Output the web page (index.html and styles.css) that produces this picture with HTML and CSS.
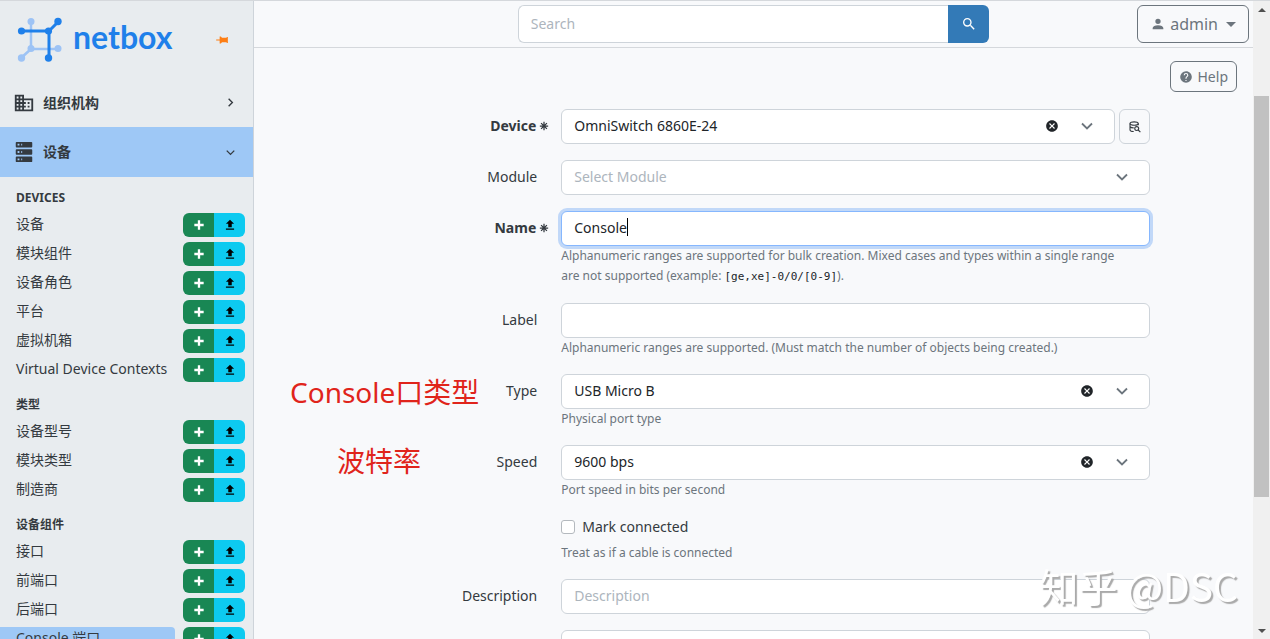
FILE: index.html
```
<!DOCTYPE html>
<html lang="zh-CN">
<head>
    <meta charset="UTF-8">
    <meta name="viewport" content="width=device-width, initial-scale=1.0">
    <title>NetBox</title>
    <link rel="stylesheet" href="styles.css">
</head>
<body>
    <svg class="sprite" aria-hidden="true">
        <symbol id="plus" viewBox="0 0 24 24"><path d="M20 14H14V20H10V14H4V10H10V4H14V10H20V14Z"/></symbol>
        <symbol id="upload" viewBox="0 0 24 24"><path d="M9,16V10H5L12,3L19,10H15V16H9M5,20V18H19V20H5Z"/></symbol>
        <symbol id="clear" viewBox="0 0 24 24"><path d="M12,2C17.53,2 22,6.47 22,12C22,17.53 17.53,22 12,22C6.47,22 2,17.53 2,12C2,6.47 6.47,2 12,2M15.59,7L12,10.59L8.41,7L7,8.41L10.59,12L7,15.59L8.41,17L12,13.41L15.59,17L17,15.59L13.41,12L17,8.41L15.59,7Z"/></symbol>
        <symbol id="chevron" viewBox="0 0 12 12"><path d="M1 3.5L6 8.5L11 3.5" fill="none" stroke="currentColor" stroke-width="1.8"/></symbol>
        <symbol id="asterisk" viewBox="0 0 12 12"><path d="M6 1V11M1 6H11M2.5 2.5L9.5 9.5M9.5 2.5L2.5 9.5" fill="none" stroke="currentColor" stroke-width="1.5"/></symbol>
    </svg>
    <div class="app">
        <nav class="sidebar">
            <div class="brand">
                <a class="logo" href="#">
                    <svg width="46" height="46" viewBox="0 0 46 46">
                        <g fill="#9dc3f5" stroke="#9dc3f5" stroke-width="2.5">
                            <path d="M14 4V32H41M14 32L4 41" fill="none"/>
                            <g stroke="none"><circle cx="14" cy="4.500" r="3.500"/><circle cx="14" cy="31.500" r="3.500"/><circle cx="41" cy="31.500" r="3.500"/><circle cx="4.500" cy="41" r="3.700"/></g>
                        </g>
                        <g fill="#1f80ea" stroke="#1f80ea" stroke-width="3">
                            <path d="M4 14H32V41M32 14L41 5" fill="none"/>
                            <g stroke="none"><circle cx="4.500" cy="14" r="3.600"/><circle cx="31.500" cy="14" r="3.600"/><circle cx="41" cy="4.500" r="3.700"/><circle cx="31.500" cy="41" r="3.700"/></g>
                        </g>
                    </svg>
                    <span>netbox</span>
                </a>
                <button class="pin" type="button" aria-label="Pin">
                    <svg width="14" height="14" viewBox="0 0 24 24"><path transform="rotate(90 12 12)" d="M16,12V4H17V2H7V4H8V12L6,14V16H11.2V22H12.8V16H18V14L16,12Z"/></svg>
                </button>
            </div>
            <a class="section" href="#">
                <svg width="22" height="22" viewBox="0 0 24 24"><path d="M18,15H16V17H18M18,11H16V13H18M20,19H12V17H14V15H12V13H14V11H12V9H20M10,7H8V5H10M10,11H8V9H10M10,15H8V13H10M10,19H8V17H10M6,7H4V5H6M6,11H4V9H6M6,15H4V13H6M6,19H4V17H6M12,7V3H2V21H22V7H12Z"/></svg>
                <span>组织机构</span>
                <svg class="arrow right" width="9" height="9"><use href="#chevron"/></svg>
            </a>
            <a class="section open" href="#">
                <svg width="22" height="22" viewBox="0 0 24 24"><path d="M4,1H20A1,1 0 0,1 21,2V6A1,1 0 0,1 20,7H4A1,1 0 0,1 3,6V2A1,1 0 0,1 4,1M4,9H20A1,1 0 0,1 21,10V14A1,1 0 0,1 20,15H4A1,1 0 0,1 3,14V10A1,1 0 0,1 4,9M4,17H20A1,1 0 0,1 21,18V22A1,1 0 0,1 20,23H4A1,1 0 0,1 3,22V18A1,1 0 0,1 4,17M9,5H10V3H9V5M9,13H10V11H9V13M9,21H10V19H9V21M5,3V5H7V3H5M5,11V13H7V11H5M5,19V21H7V19H5Z"/></svg>
                <span>设备</span>
                <svg class="arrow" width="9" height="9"><use href="#chevron"/></svg>
            </a>
            <div class="menu">
                <h6>DEVICES</h6>
                <div class="entry"><a href="#">设备</a><button class="add" type="button" aria-label="Add"><svg><use href="#plus"/></svg></button><button class="import" type="button" aria-label="Import"><svg><use href="#upload"/></svg></button></div>
                <div class="entry"><a href="#">模块组件</a><button class="add" type="button" aria-label="Add"><svg><use href="#plus"/></svg></button><button class="import" type="button" aria-label="Import"><svg><use href="#upload"/></svg></button></div>
                <div class="entry"><a href="#">设备角色</a><button class="add" type="button" aria-label="Add"><svg><use href="#plus"/></svg></button><button class="import" type="button" aria-label="Import"><svg><use href="#upload"/></svg></button></div>
                <div class="entry"><a href="#">平台</a><button class="add" type="button" aria-label="Add"><svg><use href="#plus"/></svg></button><button class="import" type="button" aria-label="Import"><svg><use href="#upload"/></svg></button></div>
                <div class="entry"><a href="#">虚拟机箱</a><button class="add" type="button" aria-label="Add"><svg><use href="#plus"/></svg></button><button class="import" type="button" aria-label="Import"><svg><use href="#upload"/></svg></button></div>
                <div class="entry"><a href="#">Virtual Device Contexts</a><button class="add" type="button" aria-label="Add"><svg><use href="#plus"/></svg></button><button class="import" type="button" aria-label="Import"><svg><use href="#upload"/></svg></button></div>
                <h6>类型</h6>
                <div class="entry"><a href="#">设备型号</a><button class="add" type="button" aria-label="Add"><svg><use href="#plus"/></svg></button><button class="import" type="button" aria-label="Import"><svg><use href="#upload"/></svg></button></div>
                <div class="entry"><a href="#">模块类型</a><button class="add" type="button" aria-label="Add"><svg><use href="#plus"/></svg></button><button class="import" type="button" aria-label="Import"><svg><use href="#upload"/></svg></button></div>
                <div class="entry"><a href="#">制造商</a><button class="add" type="button" aria-label="Add"><svg><use href="#plus"/></svg></button><button class="import" type="button" aria-label="Import"><svg><use href="#upload"/></svg></button></div>
                <h6>设备组件</h6>
                <div class="entry"><a href="#">接口</a><button class="add" type="button" aria-label="Add"><svg><use href="#plus"/></svg></button><button class="import" type="button" aria-label="Import"><svg><use href="#upload"/></svg></button></div>
                <div class="entry"><a href="#">前端口</a><button class="add" type="button" aria-label="Add"><svg><use href="#plus"/></svg></button><button class="import" type="button" aria-label="Import"><svg><use href="#upload"/></svg></button></div>
                <div class="entry"><a href="#">后端口</a><button class="add" type="button" aria-label="Add"><svg><use href="#plus"/></svg></button><button class="import" type="button" aria-label="Import"><svg><use href="#upload"/></svg></button></div>
                <div class="entry active"><a href="#">Console 端口</a><button class="add" type="button" aria-label="Add"><svg><use href="#plus"/></svg></button><button class="import" type="button" aria-label="Import"><svg><use href="#upload"/></svg></button></div>
            </div>
        </nav>

        <main class="content">
            <header class="topbar">
                <form class="search">
                    <input type="text" placeholder="Search" aria-label="Search">
                    <button type="button" aria-label="Search">
                        <svg width="16" height="16" viewBox="0 0 24 24"><path d="M9.500,3A6.500,6.500 0 0,1 16,9.500C16,11.110 15.410,12.590 14.440,13.730L14.710,14H15.500L20.500,19L19,20.500L14,15.500V14.710L13.730,14.440C12.590,15.410 11.110,16 9.500,16A6.500,6.500 0 0,1 3,9.500A6.500,6.500 0 0,1 9.500,3M9.500,5C7,5 5,7 5,9.500C5,12 7,14 9.500,14C12,14 14,12 14,9.500C14,7 12,5 9.500,5Z"/></svg>
                    </button>
                </form>
                <button class="user" type="button">
                    <svg width="16" height="16" viewBox="0 0 24 24"><path d="M12,4A4,4 0 0,1 16,8A4,4 0 0,1 12,12A4,4 0 0,1 8,8A4,4 0 0,1 12,4M12,14C16.420,14 20,15.790 20,18V20H4V18C4,15.790 7.580,14 12,14Z"/></svg>
                    admin
                    <span class="caret-down"></span>
                </button>
            </header>

            <div class="tools">
                <button class="help" type="button">
                    <svg width="14" height="14" viewBox="0 0 24 24"><path d="M15.070,11.250L14.170,12.170C13.450,12.890 13,13.500 13,15H11V14.500C11,13.390 11.450,12.390 12.170,11.670L13.410,10.410C13.780,10.050 14,9.550 14,9C14,7.890 13.100,7 12,7A2,2 0 0,0 10,9H8A4,4 0 0,1 12,5A4,4 0 0,1 16,9C16,9.880 15.640,10.670 15.070,11.250M13,19H11V17H13M12,2A10,10 0 0,0 2,12A10,10 0 0,0 12,22A10,10 0 0,0 22,12C22,6.470 17.500,2 12,2Z"/></svg>
                    Help
                </button>
            </div>

            <form class="fields">
                <div class="row">
                    <label class="required" for="device">Device<svg><use href="#asterisk"/></svg></label>
                    <div class="field with-button">
                        <div class="select">
                            <select id="device"><option>OmniSwitch 6860E-24</option></select>
                            <button class="clear" type="button" aria-label="Clear"><svg><use href="#clear"/></svg></button>
                            <svg class="chevron"><use href="#chevron"/></svg>
                        </div>
                        <button class="lookup" type="button" aria-label="Advanced search">
                            <svg width="12" height="12" viewBox="0 0 14 14"><g fill="none" stroke="currentColor" stroke-width="1.300"><ellipse cx="6" cy="3" rx="4.800" ry="2"/><path d="M1.200 3V10.500C1.200 11.500 3 12.200 5.500 12.300M10.800 3V5M1.200 6.500C2 7.600 3.500 8 5.500 8"/><circle cx="9" cy="8.800" r="2.300"/><path d="M10.700 10.500L13.300 13.100"/></g></svg>
                        </button>
                    </div>
                </div>
                <div class="row">
                    <label for="module">Module</label>
                    <div class="field">
                        <div class="select">
                            <select id="module" class="empty"><option>Select Module</option></select>
                            <svg class="chevron"><use href="#chevron"/></svg>
                        </div>
                    </div>
                </div>
                <div class="row">
                    <label class="required" for="name">Name<svg><use href="#asterisk"/></svg></label>
                    <div class="field">
                        <input id="name" class="focused" type="text" value="Console">
                        <span class="text-cursor"></span>
                        <p>Alphanumeric ranges are supported for bulk creation. Mixed cases and types within a single range are not supported (example: <code>[ge,xe]-0/0/[0-9]</code>).</p>
                    </div>
                </div>
                <div class="row">
                    <label for="label">Label</label>
                    <div class="field">
                        <input id="label" type="text">
                        <p>Alphanumeric ranges are supported. (Must match the number of objects being created.)</p>
                    </div>
                </div>
                <div class="row">
                    <label for="type">Type</label>
                    <div class="field">
                        <div class="select">
                            <select id="type"><option>USB Micro B</option></select>
                            <button class="clear" type="button" aria-label="Clear"><svg><use href="#clear"/></svg></button>
                            <svg class="chevron"><use href="#chevron"/></svg>
                        </div>
                        <p>Physical port type</p>
                    </div>
                    <span class="note note-type">Console口类型</span>
                </div>
                <div class="row">
                    <label for="speed">Speed</label>
                    <div class="field">
                        <div class="select">
                            <select id="speed"><option>9600 bps</option></select>
                            <button class="clear" type="button" aria-label="Clear"><svg><use href="#clear"/></svg></button>
                            <svg class="chevron"><use href="#chevron"/></svg>
                        </div>
                        <p>Port speed in bits per second</p>
                    </div>
                    <span class="note note-speed">波特率</span>
                </div>
                <div class="row">
                    <div class="field check">
                        <input id="connected" type="checkbox"><label for="connected">Mark connected</label>
                        <p>Treat as if a cable is connected</p>
                    </div>
                </div>
                <div class="row">
                    <label for="description">Description</label>
                    <div class="field"><input id="description" type="text" placeholder="Description"></div>
                </div>
                <div class="row">
                    <div class="field"><input type="text" aria-label="Tags"></div>
                </div>
            </form>
        </main>

        <div class="scrollbar">
            <span class="step up"></span>
            <span class="before"></span>
            <span class="thumb"></span>
            <span class="after"></span>
            <span class="step down"></span>
        </div>
    </div>
    <div class="watermark">知乎 @DSC</div>
</body>
</html>
```
FILE: styles.css
```
* {
    box-sizing: border-box;
}
body {
    margin: 0;
    background-color: #f8f9fb;
    color: #343a40;
    font-family: "Noto Sans", "Noto Sans CJK SC", sans-serif;
    font-size: 14px;
    overflow: hidden;
}
button, input, select {
    font: inherit;
    margin: 0;
}
button {
    display: flex;
    align-items: center;
    justify-content: center;
    padding: 0;
    border: 0;
    background: none;
    color: inherit;
    cursor: pointer;
}
a {
    color: inherit;
    text-decoration: none;
}
svg {
    fill: currentColor;
    flex: none;
}
.sprite {
    display: none;
}
.app {
    display: flex;
    height: 100vh;
    border-top: 1px solid #d5d8dc;
}

/* sidebar */
.sidebar {
    width: 254px;
    flex: none;
    overflow: hidden;
    background-color: #e8ecef;
    border-right: 1px solid #ced4da;
}
.brand {
    display: flex;
    align-items: center;
    justify-content: space-between;
    height: 77px;
    padding: 0 24px 0 17px;
}
.logo {
    display: flex;
    align-items: center;
    gap: 10px;
    color: #1f80ea;
    font-family: Lato, sans-serif;
    font-size: 32px;
    font-weight: 700;
    line-height: 36px;
}
.logo span {
    padding-bottom: 6px;
}
.pin {
    color: #fd7e14;
}
.section {
    display: flex;
    align-items: center;
    height: 49px;
    padding: 0 18px 0 13px;
    gap: 8px;
    font-weight: 700;
}
.section span {
    flex: 1;
    padding-bottom: 2px;
}
.section.open {
    height: 50px;
    background-color: #9ec8f6;
}
.arrow.right {
    transform: rotate(-90deg);
}
.menu h6 {
    margin: 0;
    padding: 12px 16px 0;
    height: 36px;
    font-size: 12px;
    line-height: 18px;
}
.entry {
    display: flex;
    height: 24px;
    margin: 0 8px 5px 0;
}
.menu .entry + h6 {
    height: 33px;
    padding-top: 9px;
}
.entry a {
    flex: 1;
    margin-right: 8px;
    padding-left: 16px;
    line-height: 22px;
    white-space: nowrap;
    border-radius: 0 4px 4px 0;
}
.entry.active a {
    background-color: #9ec8f6;
}
.entry button {
    width: 31px;
}
.entry svg {
    width: 14px;
    height: 14px;
}
.add {
    background-color: #198754;
    color: #fff;
    border-radius: 6px 0 0 6px;
}
.import {
    background-color: #0dcaf0;
    color: #000;
    border-radius: 0 6px 6px 0;
}

/* top bar */
.content {
    flex: 1;
    min-width: 0;
    overflow: hidden;
}
.topbar {
    display: grid;
    grid-template-columns: 1fr 2fr 1fr;
    gap: 24px;
    align-items: center;
    height: 47px;
    padding: 0 4px;
    border-bottom: 1px solid #d5d8dc;
}
.search {
    grid-column: 2;
    display: flex;
    height: 38px;
}
.search input {
    flex: 1;
    min-width: 0;
    padding: 0 12px 2px;
    border: 1px solid #ced4da;
    border-right: 0;
    border-radius: 6px 0 0 6px;
}
.search button {
    width: 41px;
    background-color: #337ab7;
    color: #fff;
    border-radius: 0 6px 6px 0;
}
.user, .help {
    border: 1px solid #6c757d;
    border-radius: 6px;
    color: #6c757d;
}
.user {
    justify-self: end;
    height: 38px;
    padding: 0 12px;
    gap: 4px;
    font-size: 16px;
}
.caret-down {
    margin-left: 4px;
    border: 5px solid transparent;
    border-top-color: #6c757d;
    border-bottom: 0;
}
.tools {
    display: flex;
    justify-content: flex-end;
    padding: 13px 16px 17px;
}
.help {
    height: 31px;
    padding: 0 8px;
    gap: 5px;
}

/* form */
.fields {
    padding: 0 91px;
}
.row {
    display: grid;
    grid-template-columns: 1fr 3fr;
    position: relative;
    margin-bottom: 16px;
}
.row > label {
    padding-right: 12px;
    line-height: 33px;
    text-align: right;
}
.row > .required {
    padding-right: 0;
    font-weight: 700;
}
.required svg {
    width: 10px;
    height: 10px;
    margin-left: 3px;
}
.field {
    grid-column: 2;
    position: relative;
    padding: 0 12px;
}
.field input[type="text"], select {
    display: block;
    width: 100%;
    height: 35px;
    padding: 0 12px 2px;
    border: 1px solid #ced4da;
    border-radius: 6px;
    background-color: #fff;
    color: #212529;
}
select {
    appearance: none;
}
.field select.empty, input::placeholder {
    color: #adb5bd;
}
.field input.focused {
    border-color: #86b7fe;
    box-shadow: 0 0 0 3px #c1d8f8;
}
.text-cursor {
    position: absolute;
    top: 7px;
    left: 78px;
    width: 1px;
    height: 18px;
    background-color: #000;
}
.field p {
    margin: 0;
    padding-right: 24px;
    color: #6c757d;
    font-size: 12px;
    line-height: 20px;
}
code {
    color: #212529;
    font-family: "DejaVu Sans Mono", monospace;
    font-size: 11px;
}
.with-button {
    display: flex;
    gap: 4px;
}
.select {
    flex: 1;
    position: relative;
}
.select .clear, .chevron {
    position: absolute;
    top: 10px;
}
.select .clear {
    right: 56px;
    color: #212529;
}
.clear svg {
    width: 14px;
    height: 14px;
}
.chevron {
    right: 22px;
    width: 12px;
    height: 14px;
    color: #6c757d;
    pointer-events: none;
}
.lookup {
    width: 31px;
    height: 35px;
    border: 1px solid #ced4da;
    border-radius: 6px;
}
.check {
    line-height: 22px;
}
.check input {
    appearance: none;
    width: 14px;
    height: 14px;
    margin-right: 7px;
    border: 1px solid #b4b9be;
    border-radius: 3px;
    background-color: #fff;
    vertical-align: -2px;
}
.check p {
    margin-top: 5px;
}

/* annotations */
.note {
    position: absolute;
    color: #e0241b;
    font-size: 28px;
    line-height: 36px;
    white-space: nowrap;
}
.note-type {
    left: -55px;
}
.note-speed {
    left: -8px;
    line-height: 32px;
}
.watermark {
    position: fixed;
    right: 32px;
    bottom: 30px;
    color: #fff;
    font-family: "Noto Sans CJK SC", sans-serif;
    font-size: 39px;
    line-height: 48px;
    text-shadow: 2px 2px 1px #aaa;
}

/* scrollbar */
.scrollbar {
    display: flex;
    flex-direction: column;
    width: 17px;
    padding: 0 1px;
    background-color: #f0f0f0;
}
.step {
    height: 17px;
    display: flex;
    align-items: center;
    justify-content: center;
}
.step::before {
    content: "";
    border: 4px solid transparent;
}
.up::before {
    border-top: 0;
    border-bottom-color: #505050;
}
.down::before {
    border-bottom: 0;
    border-top-color: #505050;
}
.before {
    flex: 78;
}
.thumb {
    flex: 401;
    background-color: #c1c1c1;
}
.after {
    flex: 125;
}
```
